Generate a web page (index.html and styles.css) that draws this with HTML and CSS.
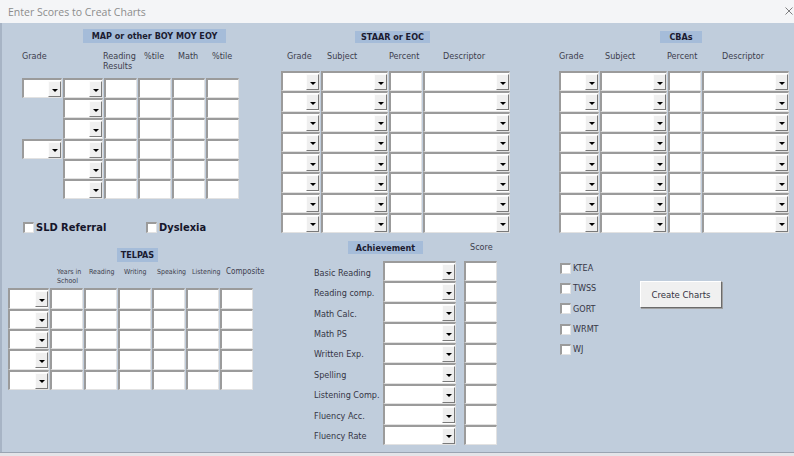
FILE: index.html
```html
<!DOCTYPE html>
<html lang="en">
<head>
<meta charset="utf-8">
<title>Enter Scores to Creat Charts</title>
<link rel="stylesheet" href="styles.css">
</head>
<body>
<div class="window">
  <header class="titlebar">
    <span class="title">Enter Scores to Creat Charts</span>
    <span class="close"><svg width="8" height="8" viewBox="0 0 8 8"><path d="M0.5 0.5L7.5 7.5M7.5 0.5L0.5 7.5" stroke="#707070" stroke-width="0.9" fill="none"/></svg></span>
  </header>
  <main class="form">
    <section class="col col1">
      <div class="hd hd-map">MAP or other BOY MOY EOY</div>
      <div class="lbls lbls-map"><span>Grade</span><span>Reading<br>Results</span><span>%tile</span><span>Math</span><span>%tile</span></div>
      <div class="grid grid-map">
        <span class="cb"><i></i></span><span class="cb"><i></i></span><span class="tb"></span><span class="tb"></span><span class="tb"></span><span class="tb"></span>
        <span></span><span class="cb"><i></i></span><span class="tb"></span><span class="tb"></span><span class="tb"></span><span class="tb"></span>
        <span></span><span class="cb"><i></i></span><span class="tb"></span><span class="tb"></span><span class="tb"></span><span class="tb"></span>
        <span class="cb"><i></i></span><span class="cb"><i></i></span><span class="tb"></span><span class="tb"></span><span class="tb"></span><span class="tb"></span>
        <span></span><span class="cb"><i></i></span><span class="tb"></span><span class="tb"></span><span class="tb"></span><span class="tb"></span>
        <span></span><span class="cb"><i></i></span><span class="tb"></span><span class="tb"></span><span class="tb"></span><span class="tb"></span>
      </div>
      <div class="flags">
        <label class="flag flag-sld"><span class="ck"></span>SLD Referral</label>
        <label class="flag"><span class="ck"></span>Dyslexia</label>
      </div>
      <div class="hd hd-telpas">TELPAS</div>
      <div class="lbls lbls-telpas"><span>Years in<br>School</span><span>Reading</span><span>Writing</span><span>Speaking</span><span>Listening</span><span class="big">Composite</span></div>
      <div class="grid grid-telpas">
        <span class="cb"><i></i></span><span class="tb"></span><span class="tb"></span><span class="tb"></span><span class="tb"></span><span class="tb"></span><span class="tb"></span>
        <span class="cb"><i></i></span><span class="tb"></span><span class="tb"></span><span class="tb"></span><span class="tb"></span><span class="tb"></span><span class="tb"></span>
        <span class="cb"><i></i></span><span class="tb"></span><span class="tb"></span><span class="tb"></span><span class="tb"></span><span class="tb"></span><span class="tb"></span>
        <span class="cb"><i></i></span><span class="tb"></span><span class="tb"></span><span class="tb"></span><span class="tb"></span><span class="tb"></span><span class="tb"></span>
        <span class="cb"><i></i></span><span class="tb"></span><span class="tb"></span><span class="tb"></span><span class="tb"></span><span class="tb"></span><span class="tb"></span>
      </div>
    </section>

    <section class="col col2">
      <div class="hd hd-staar">STAAR or EOC</div>
      <div class="lbls lbls-staar"><span>Grade</span><span>Subject</span><span>Percent</span><span>Descriptor</span></div>
      <div class="grid grid-staar">
        <span class="cb"><i></i></span><span class="cb"><i></i></span><span class="tb"></span><span class="cb"><i></i></span>
        <span class="cb"><i></i></span><span class="cb"><i></i></span><span class="tb"></span><span class="cb"><i></i></span>
        <span class="cb"><i></i></span><span class="cb"><i></i></span><span class="tb"></span><span class="cb"><i></i></span>
        <span class="cb"><i></i></span><span class="cb"><i></i></span><span class="tb"></span><span class="cb"><i></i></span>
        <span class="cb"><i></i></span><span class="cb"><i></i></span><span class="tb"></span><span class="cb"><i></i></span>
        <span class="cb"><i></i></span><span class="cb"><i></i></span><span class="tb"></span><span class="cb"><i></i></span>
        <span class="cb"><i></i></span><span class="cb"><i></i></span><span class="tb"></span><span class="cb"><i></i></span>
        <span class="cb"><i></i></span><span class="cb"><i></i></span><span class="tb"></span><span class="cb"><i></i></span>
      </div>
      <div class="ach-head">
        <div class="hd hd-ach">Achievement</div>
        <span class="score-lbl">Score</span>
      </div>
      <div class="grid grid-ach">
        <span class="al">Basic Reading</span><span class="cb"><i></i></span><span class="tb sc"></span>
        <span class="al">Reading comp.</span><span class="cb"><i></i></span><span class="tb sc"></span>
        <span class="al">Math Calc.</span><span class="cb"><i></i></span><span class="tb sc"></span>
        <span class="al">Math PS</span><span class="cb"><i></i></span><span class="tb sc"></span>
        <span class="al">Written Exp.</span><span class="cb"><i></i></span><span class="tb sc"></span>
        <span class="al">Spelling</span><span class="cb"><i></i></span><span class="tb sc"></span>
        <span class="al">Listening Comp.</span><span class="cb"><i></i></span><span class="tb sc"></span>
        <span class="al">Fluency Acc.</span><span class="cb"><i></i></span><span class="tb sc"></span>
        <span class="al">Fluency Rate</span><span class="cb"><i></i></span><span class="tb sc"></span>
      </div>
    </section>

    <section class="col col3">
      <div class="hd hd-cba">CBAs</div>
      <div class="lbls lbls-cba"><span>Grade</span><span>Subject</span><span>Percent</span><span>Descriptor</span></div>
      <div class="grid grid-cba">
        <span class="cb"><i></i></span><span class="cb"><i></i></span><span class="tb"></span><span class="cb"><i></i></span>
        <span class="cb"><i></i></span><span class="cb"><i></i></span><span class="tb"></span><span class="cb"><i></i></span>
        <span class="cb"><i></i></span><span class="cb"><i></i></span><span class="tb"></span><span class="cb"><i></i></span>
        <span class="cb"><i></i></span><span class="cb"><i></i></span><span class="tb"></span><span class="cb"><i></i></span>
        <span class="cb"><i></i></span><span class="cb"><i></i></span><span class="tb"></span><span class="cb"><i></i></span>
        <span class="cb"><i></i></span><span class="cb"><i></i></span><span class="tb"></span><span class="cb"><i></i></span>
        <span class="cb"><i></i></span><span class="cb"><i></i></span><span class="tb"></span><span class="cb"><i></i></span>
        <span class="cb"><i></i></span><span class="cb"><i></i></span><span class="tb"></span><span class="cb"><i></i></span>
      </div>
      <div class="lower">
        <div class="tests">
          <label class="test"><span class="ck"></span>KTEA</label>
          <label class="test"><span class="ck"></span>TWSS</label>
          <label class="test"><span class="ck"></span>GORT</label>
          <label class="test"><span class="ck"></span>WRMT</label>
          <label class="test"><span class="ck"></span>WJ</label>
        </div>
        <button class="btn" type="button">Create Charts</button>
      </div>
    </section>
  </main>
</div>
</body>
</html>
```

FILE: styles.css
```css
* { box-sizing: border-box; margin: 0; padding: 0; }
html, body { width: 794px; height: 456px; overflow: hidden; background: #e3e4e8; }
body {
  font-family: "DejaVu Sans Condensed", "DejaVu Sans", sans-serif;
  font-stretch: condensed;
  color: #3b3b48;
}
.window { width: 794px; height: 456px; }

.titlebar {
  height: 23px;
  background: #f4f5f7;
  display: flex;
  align-items: center;
  justify-content: space-between;
  padding: 0 1px 0 8px;
  font-family: "Open Sans", sans-serif;
  font-stretch: normal;
  font-size: 10.5px;
  color: #8c8c8c;
}
.close { display: flex; width: 8px; height: 8px; margin-top: -1px; }

.form {
  height: 430px;
  background: #c0cddc;
  box-shadow: inset 2px 0 0 #a7b4c5;
  border-bottom: 1px solid #9aa4b2;
  display: flex;
  align-items: flex-start;
}
.col { display: flex; flex-direction: column; }
.col1 { width: 270px; }
.col2 { width: 270px; }
.col3 { width: 254px; }

/* section headers */
.hd {
  background: #a5bcd9;
  font-weight: bold;
  font-size: 9px;
  color: #1b1b30;
  display: flex;
  align-items: center;
  justify-content: center;
}
.hd-map { margin: 6px 0 0 83px; width: 143px; height: 14px; }
.hd-telpas { margin: 14px 0 0 117px; width: 41px; height: 14px; }
.hd-staar { margin: 8px 0 0 85px; width: 75px; height: 12px; }
.hd-cba { margin: 8px 0 0 120px; width: 42px; height: 12px; }
.hd-ach { margin-left: 78px; width: 75px; height: 13px; }

/* column labels */
.lbls { display: grid; font-size: 9px; line-height: 10px; color: #3d3d4c; }
.lbls-map { margin-top: 8px; height: 20px; padding-left: 22px; grid-template-columns: 81px 41px 34px 34px auto; }
.lbls-staar { margin-top: 8px; height: 10px; padding-left: 17px; grid-template-columns: 40px 62px 54px auto; }
.lbls-cba { margin-top: 8px; height: 10px; padding-left: 19px; grid-template-columns: 46px 62px 55px auto; }
.lbls-telpas {
  margin-top: 6px; height: 17px; padding-left: 57px;
  grid-template-columns: 32px 35px 33px 35px 34px auto;
  font-size: 7px; line-height: 8.5px;
}
.lbls-telpas .big { font-size: 8px; }

/* grids of controls */
.grid { display: grid; column-gap: 1px; }
.grid-map { margin-top: 7px; padding-left: 22px; grid-template-columns: 40px 40px 33px 33px 33px 33px; grid-auto-rows: 20.2px; }
.grid-staar { margin-top: 10px; padding-left: 11px; grid-template-columns: 39px 67px 33px 87px; grid-auto-rows: 20.25px; }
.grid-cba { margin-top: 10px; padding-left: 19px; grid-template-columns: 40px 67px 33px 87px; grid-auto-rows: 20.25px; }
.grid-telpas { margin-top: 3px; padding-left: 8px; grid-template-columns: 41px 33px 33px 33px 33px 33px 33px; grid-auto-rows: 20.4px; }
.grid-ach { margin-top: 7px; padding-left: 44px; grid-template-columns: 69px 73px 41px; grid-auto-rows: 20.45px; column-gap: 0; }

/* controls */
.tb, .cb, .ck {
  background: #fff;
  border-top: 2px solid #9b9b9b;
  border-left: 2px solid #9b9b9b;
  border-right: 1px solid #e2e2e2;
  border-bottom: 1px solid #e2e2e2;
}
.sc { margin-left: 8px; }
.cb { display: flex; justify-content: flex-end; align-items: flex-start; padding-top: 1px; }
.cb i {
  width: 13px;
  height: 16px;
  background: #efefef;
  border-top: 1px solid #fcfcfc;
  border-left: 1px solid #fcfcfc;
  border-right: 1px solid #7a7a7a;
  border-bottom: 1px solid #7a7a7a;
  display: flex;
  align-items: center;
  justify-content: center;
}
.cb i::after {
  content: "";
  margin-top: 2px;
  border-left: 3px solid transparent;
  border-right: 3px solid transparent;
  border-top: 3px solid #000;
}

.al { display: flex; align-items: center; padding-top: 3px; font-size: 9px; color: #353545; white-space: nowrap; }

/* checkboxes */
.ck { width: 11px; height: 11px; flex: none; }
.flags { margin-top: 21px; height: 14px; padding-left: 23px; display: flex; align-items: center; }
.flag { display: flex; align-items: center; gap: 2px; font-weight: bold; font-size: 11px; color: #15152a; }
.flag-sld { width: 123px; }

.ach-head { margin-top: 8px; height: 13px; display: flex; align-items: center; }
.score-lbl { margin-left: 47px; font-size: 9px; color: #3d3d4c; margin-top: -2px; }

.lower { margin-top: 25px; display: flex; align-items: flex-start; }
.tests { width: 100px; padding-left: 20px; display: flex; flex-direction: column; }
.test { height: 20.3px; display: flex; align-items: center; gap: 2px; font-size: 9px; color: #353545; }
.btn {
  margin-top: 23px;
  width: 82px;
  height: 27px;
  background: #f0f0f0;
  border: 1px solid;
  border-color: #ffffff #6b6b6b #6b6b6b #ffffff;
  box-shadow: 1px 1px 0 #a0a0a0;
  font-family: "DejaVu Sans Condensed", "DejaVu Sans", sans-serif;
  font-stretch: condensed;
  font-size: 9.5px;
  color: #333340;
}
```
